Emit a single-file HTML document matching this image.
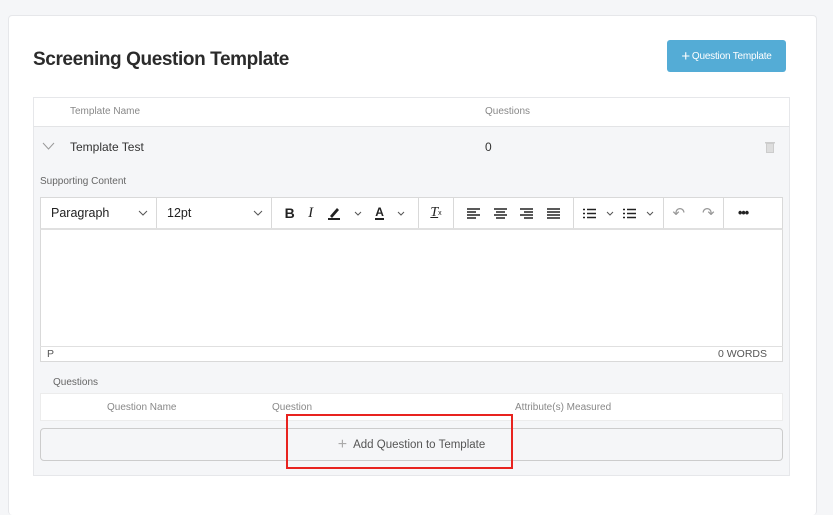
<!DOCTYPE html>
<html><head><meta charset="utf-8"><style>
*{box-sizing:border-box;margin:0;padding:0}
body{width:833px;height:506px;overflow:hidden;background:#f5f6f8;font-family:"Liberation Sans",sans-serif;position:relative;color:#333}
.abs{position:absolute}
.card{left:8px;top:15px;width:809px;height:500px;background:#fff;border:1px solid #e6e7ea;border-bottom:none;border-radius:4px}
h1{position:absolute;left:33px;top:49px;font-size:19px;font-weight:bold;color:#2b2b2b;letter-spacing:-0.4px}
.btn{left:667px;top:40px;width:119px;height:32px;background:#54acd6;border-radius:3px;color:#fff;font-size:10px;display:flex;align-items:center;justify-content:center;letter-spacing:-0.2px}
.tbl{left:33px;top:97px;width:757px;height:379px;background:#f5f6f8;border:1px solid #e6e7ea}
.hdr{left:33px;top:97px;width:757px;height:30px;background:#fff;border:1px solid #e6e7ea;border-bottom:1px solid #e3e4e6}
.sm{font-size:10px;color:#888}
.ed{left:40px;top:197px;width:743px;height:165px;background:#fff;border:1px solid #d9d9d9}
.tb{left:40px;top:197px;width:743px;height:33px;border:1px solid #d9d9d9;border-bottom:2px solid #e0e0e0;display:flex}
.g{height:100%;border-right:1px solid #d9d9d9;display:flex;align-items:center;font-size:12.5px;color:#222}
.st{left:40px;top:346px;width:743px;height:16px;border-top:1px solid #e0e0e0;font-size:10.5px;color:#555}
.qh{left:40px;top:393px;width:743px;height:28px;background:#fff;border:1px solid #ececec}
.add{left:40px;top:428px;width:743px;height:33px;background:#f5f6f8;border:1px solid #ccc;border-radius:4px;display:flex;align-items:center;justify-content:center;font-size:11.5px;color:#555}
.red{left:286px;top:414px;width:227px;height:55px;border:2px solid #e8231f}
svg{display:block}
</style></head><body>
<div class="abs card"></div>
<h1>Screening Question Template</h1>
<div class="abs btn"><span style="font-size:15px;margin-right:2px">+</span>Question Template</div>
<div class="abs tbl"></div>
<div class="abs hdr"></div>
<div class="abs sm" style="left:70px;top:106px">Template Name</div>
<div class="abs sm" style="left:485px;top:106px">Questions</div>
<svg class="abs" style="left:42px;top:142px" width="13" height="9"><path d="M1 1l5.5 6L12 1" stroke="#999" fill="none"/></svg>
<div class="abs" style="left:70px;top:140px;font-size:12px;color:#333">Template Test</div>
<div class="abs" style="left:485px;top:140px;font-size:12px">0</div>
<svg class="abs" style="left:765px;top:141px" width="10" height="12"><rect x="1.5" y="2.5" width="7" height="9" fill="#ddd" stroke="#ccc"/><rect x="0" y="1" width="10" height="1.5" fill="#ccc"/></svg>
<div class="abs" style="left:40px;top:176px;font-size:10px;color:#666">Supporting Content</div>
<div class="abs ed"></div>
<div class="abs tb">
 <div class="g" style="width:116px;padding-left:10px;justify-content:space-between;padding-right:8px">Paragraph<svg width="10" height="6"><path d="M1 1l4 4 4-4" stroke="#555" fill="none"/></svg></div>
 <div class="g" style="width:115px;padding-left:10px;justify-content:space-between;padding-right:8px">12pt<svg width="10" height="6"><path d="M1 1l4 4 4-4" stroke="#555" fill="none"/></svg></div>
 <div class="g" style="width:147px;justify-content:space-around;padding:0 6px"><b style="font-size:14px">B</b><i style="font-family:'Liberation Serif';font-size:15px">I</i>
  <svg width="14" height="14"><path d="M3 10l7-8 2 2-7 8z" fill="#222"/><rect x="1" y="12" width="12" height="2" fill="#222"/></svg>
  <svg width="8" height="5"><path d="M1 1l3 3 3-3" stroke="#555" fill="none"/></svg>
  <span style="border-bottom:2px solid #222;font-size:12px;line-height:12px;font-weight:bold">A</span><svg width="8" height="5"><path d="M1 1l3 3 3-3" stroke="#555" fill="none"/></svg></div>
 <div class="g" style="width:35px;justify-content:center"><i style="font-family:'Liberation Serif';text-decoration:underline;font-size:14px">T</i><span style="font-size:7px">x</span></div>
 <div class="g" style="width:120px;justify-content:space-around;padding:0 6px">
  <svg width="13" height="11"><path d="M0 1h13M0 4h9M0 7h13M0 10h9" stroke="#222" stroke-width="1.4"/></svg>
  <svg width="13" height="11"><path d="M0 1h13M2 4h9M0 7h13M2 10h9" stroke="#222" stroke-width="1.4"/></svg>
  <svg width="13" height="11"><path d="M0 1h13M4 4h9M0 7h13M4 10h9" stroke="#222" stroke-width="1.4"/></svg>
  <svg width="13" height="11"><path d="M0 1h13M0 4h13M0 7h13M0 10h13" stroke="#222" stroke-width="1.4"/></svg></div>
 <div class="g" style="width:90px;justify-content:space-around;padding:0 4px">
  <svg width="13" height="11"><path d="M0 1.5h2M4 1.5h9M0 5.5h2M4 5.5h9M0 9.5h2M4 9.5h9" stroke="#222" stroke-width="1.4"/></svg><svg width="8" height="5"><path d="M1 1l3 3 3-3" stroke="#555" fill="none"/></svg>
  <svg width="13" height="11"><path d="M0 1.5h2M4 1.5h9M0 5.5h2M4 5.5h9M0 9.5h2M4 9.5h9" stroke="#222" stroke-width="1.4"/></svg><svg width="8" height="5"><path d="M1 1l3 3 3-3" stroke="#555" fill="none"/></svg></div>
 <div class="g" style="width:60px;justify-content:space-around;color:#999;font-size:15px">↶<span>↷</span></div>
 <div class="g" style="border:none;padding-left:14px;font-weight:bold;letter-spacing:-1px">•••</div>
</div>
<div class="abs st"><span style="position:absolute;left:7px;top:1px">P</span><span style="position:absolute;right:16px;top:1px">0 WORDS</span></div>
<div class="abs sm" style="left:53px;top:377px;color:#666">Questions</div>
<div class="abs qh"></div>
<div class="abs sm" style="left:107px;top:402px">Question Name</div>
<div class="abs sm" style="left:272px;top:402px">Question</div>
<div class="abs sm" style="left:515px;top:402px">Attribute(s) Measured</div>
<div class="abs add"><span style="color:#aaa;font-size:16px;margin-right:6px">+</span>Add Question to Template</div>
<div class="abs red"></div>
</body></html>
